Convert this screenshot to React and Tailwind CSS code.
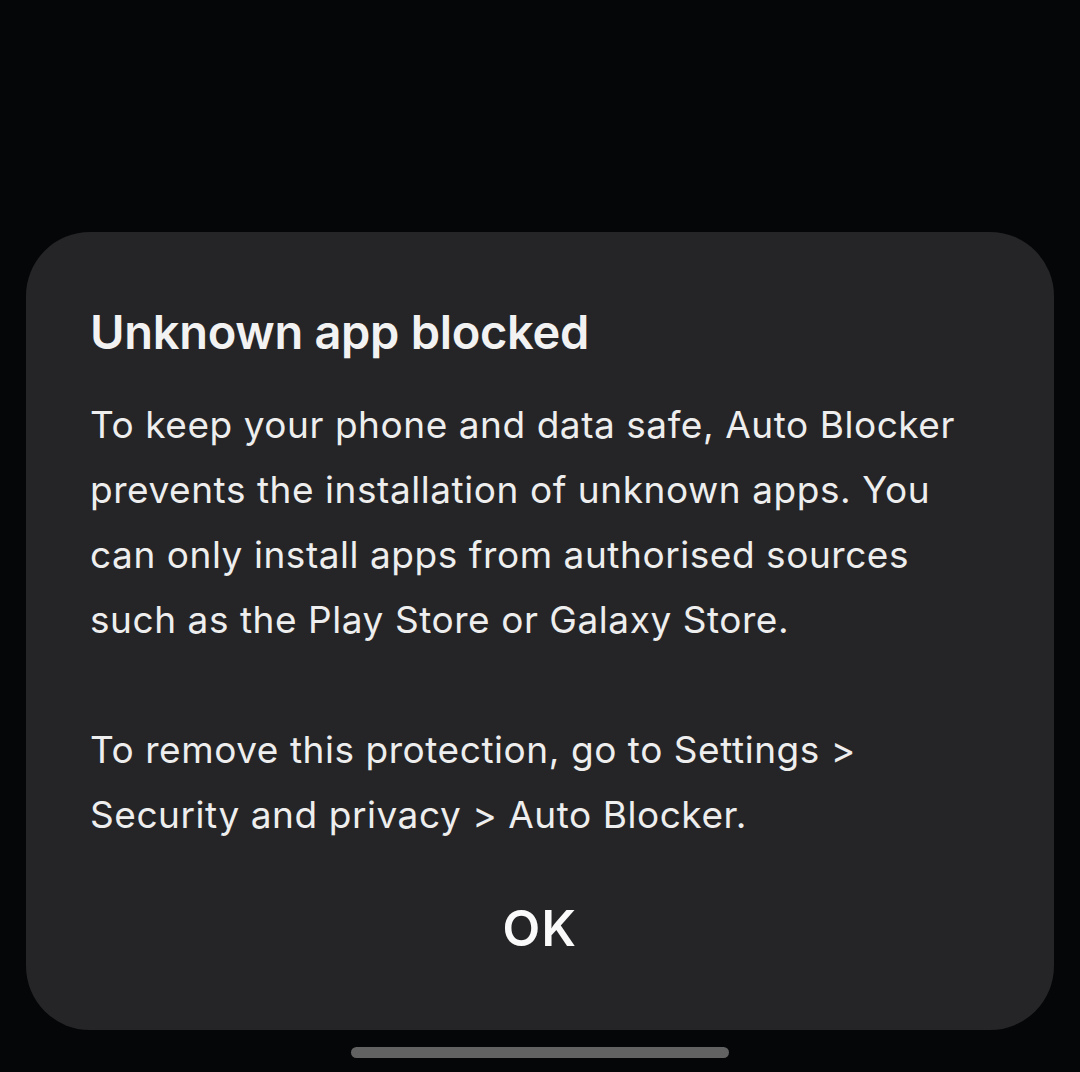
export default function App() {
  return (
    <div
      className="w-[1080px] h-[1072px] bg-[#050608] flex flex-col items-center overflow-hidden"
      style={{ fontFamily: 'Inter, "Noto Sans", sans-serif' }}
    >
      <div className="mt-[232px] w-[1028px] h-[798px] rounded-[64px] bg-[#252527] px-[64px] pt-[70px] flex flex-col">
        <h1 className="text-[47px] leading-[60px] font-semibold text-[#f2f2f2] tracking-[-0.3px]">
          Unknown app blocked
        </h1>
        <div className="mt-[30px] text-[37px] leading-[65px] text-[#eeeeee] tracking-[0.55px]">
          <p>
            To keep your phone and data safe, Auto Blocker prevents the installation of unknown apps. You can only
            install apps from authorised sources such as the Play Store or Galaxy Store.
          </p>
          <p className="mt-[65px]">
            To remove this protection, go to Settings &gt; Security and privacy &gt; Auto Blocker.
          </p>
        </div>
        <button className="mt-[52px] self-center text-[49px] leading-[60px] font-semibold text-[#fafafa] tracking-[1.5px]">
          OK
        </button>
      </div>
      <div className="mt-[17px] w-[378px] h-[11px] rounded-full bg-[#626262]" />
    </div>
  );
}
